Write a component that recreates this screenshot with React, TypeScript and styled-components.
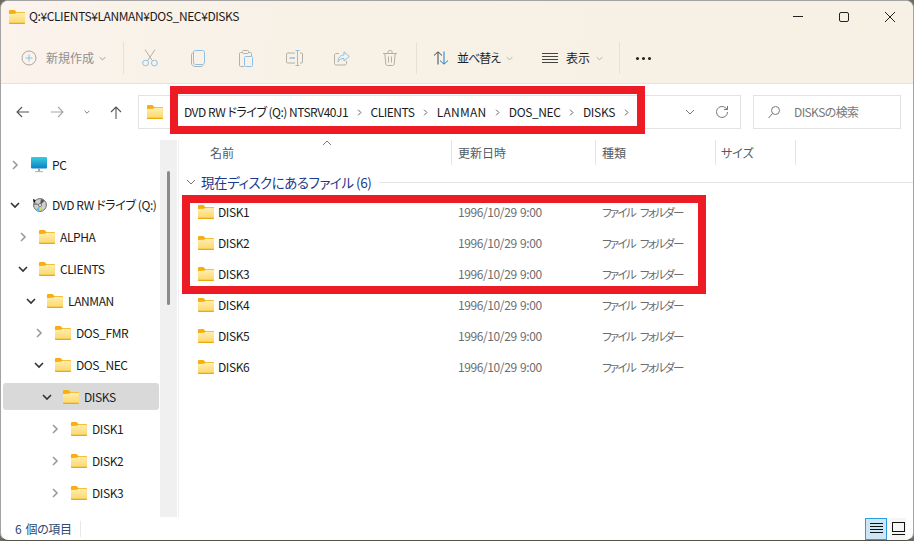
import React from "react";
import styled, { createGlobalStyle } from "styled-components";

const Global = createGlobalStyle`
  html, body { margin: 0; padding: 0; width: 914px; height: 541px; overflow: hidden; background: #6f6a60; }
  #root { width: 914px; height: 541px; }
  * { box-sizing: border-box; }
`;

const Window = styled.div`
  position: relative;
  width: 914px;
  height: 541px;
  display: flex;
  flex-direction: column;
  background: #fff;
  border: 1px solid #a3a3a3;
  border-bottom: 1px solid #55524c;
  border-radius: 8px;
  overflow: hidden;
  font-family: "Noto Sans CJK JP", "Open Sans", sans-serif;
  font-feature-settings: "palt";
  font-size: 12px;
  letter-spacing: -0.4px;
  color: #1b1b1b;
`;

const Chrome = styled.div`
  height: 83px;
  flex: none;
  background: linear-gradient(100deg, #fbf3ec 0%, #f7f1e6 35%, #f6f0e5 100%);
  border-bottom: 1px solid #e6e3dc;
  display: flex;
  flex-direction: column;
`;

const TitleBar = styled.div`
  height: 31px;
  flex: none;
  display: flex;
  align-items: center;
  padding-left: 8px;
`;

const TitleText = styled.span`
  margin: 0 0 2px 4px;
  flex: 1;
`;

const WinButton = styled.div`
  width: 46px;
  height: 31px;
  display: flex;
  align-items: center;
  justify-content: center;
`;

const Toolbar = styled.div`
  height: 32px;
  margin-top: 10px;
  display: flex;
  align-items: center;
`;

const NewButton = styled.div`
  width: 122px;
  padding-left: 20px;
  display: flex;
  align-items: center;
  color: #8f8f8f;
  letter-spacing: 0;
`;

const NewLabel = styled.span`
  margin: 0 5px 2px 9px;
`;

const ToolSep = styled.div`
  width: 1px;
  height: 32px;
  background: #e6e1d6;
  flex: none;
`;

const ToolIcon = styled.div`
  width: 48px;
  height: 32px;
  flex: none;
  display: flex;
  align-items: center;
  justify-content: center;
`;

const ToolGap = styled.div<{ $w: number }>`
  width: ${(p) => p.$w}px;
  flex: none;
`;

const TextTool = styled.div<{ $w: number; $pad: number }>`
  width: ${(p) => p.$w}px;
  padding-left: ${(p) => p.$pad}px;
  display: flex;
  align-items: center;
  color: #1f1f1f;
`;

const ToolLabel = styled.span<{ $ls: number }>`
  margin: 0 6px 2px 8px;
  letter-spacing: ${(p) => p.$ls}px;
`;

const MoreDots = styled.div`
  margin-left: 16px;
  display: flex;
  gap: 3px;
`;

const Dot = styled.span`
  width: 3px;
  height: 3px;
  border-radius: 50%;
  background: #222;
`;

const AddressRow = styled.div`
  height: 56px;
  flex: none;
  display: flex;
  align-items: center;
  padding: 0 12px 0 13px;
`;

const NavButton = styled.div<{ $w: number; $ml?: number }>`
  width: ${(p) => p.$w}px;
  margin-left: ${(p) => p.$ml ?? 0}px;
  height: 24px;
  flex: none;
  display: flex;
  align-items: center;
  justify-content: center;
`;

const AddressBox = styled.div`
  width: 603px;
  height: 34px;
  flex: none;
  border: 1px solid #e3e3e3;
  display: flex;
  align-items: center;
  padding-left: 8px;
`;

const Crumbs = styled.div`
  margin-left: 21px;
  flex: 1;
  min-width: 0;
  display: flex;
  align-items: center;
  color: #1b1b1b;
  white-space: nowrap;
`;

const CrumbLabel = styled.span<{ $ls: number }>`
  margin-bottom: 2px;
  letter-spacing: ${(p) => p.$ls}px;
`;

const CrumbChevron = styled.span`
  width: 22.5px;
  flex: none;
  display: flex;
  justify-content: center;
`;

const AddressTail = styled.div`
  display: flex;
  align-items: center;
  gap: 20px;
  padding-right: 11px;
`;

const SearchBox = styled.div`
  margin-left: 12px;
  width: 148px;
  height: 34px;
  flex: none;
  border: 1px solid #e3e3e3;
  display: flex;
  align-items: center;
  padding-left: 14px;
  gap: 14px;
  color: #767676;
  letter-spacing: -0.6px;
`;

const SearchLabel = styled.span`
  margin-bottom: 2px;
`;

const Body = styled.div`
  flex: 1;
  min-height: 0;
  display: flex;
`;

const TreePane = styled.div`
  width: 159px;
  flex: none;
  padding-top: 9px;
  overflow: hidden;
`;

const TreeRow = styled.div<{ $depth: number; $top?: boolean; $selected?: boolean }>`
  height: 32px;
  margin-bottom: ${(p) => (p.$top ? 8 : 0)}px;
  display: flex;
  align-items: center;
  padding-left: ${(p) => 6 + p.$depth * 8}px;
  position: relative;
  z-index: 0;
  &::before {
    content: "";
    display: ${(p) => (p.$selected ? "block" : "none")};
    position: absolute;
    z-index: -1;
    left: 2px;
    right: 1px;
    top: 2px;
    bottom: 3px;
    background: #d9d9d9;
    border-radius: 3px;
  }
`;

const TreeChevron = styled.span`
  width: 16px;
  flex: none;
  display: flex;
  justify-content: center;
`;

const TreeIcon = styled.span`
  width: 16px;
  margin-left: 8px;
  flex: none;
  display: flex;
`;

const TreeLabel = styled.span`
  margin: 0 0 2px 5px;
  white-space: nowrap;
`;

const ScrollTrack = styled.div`
  width: 17px;
  flex: none;
  background: #f0f0f0;
  padding-top: 31px;
  display: flex;
  justify-content: center;
`;

const ScrollThumb = styled.div`
  width: 3px;
  height: 134px;
  background: #8a8a8a;
  border-radius: 2px;
`;

const Main = styled.div`
  flex: 1;
  margin-left: 1px;
  border-left: 1px solid #f0f0f0;
  position: relative;
`;

const Header = styled.div`
  height: 25px;
  display: flex;
  color: #4f5b66;
  letter-spacing: 0;
`;

const HeadCell = styled.div<{ $w: number; $pad: number }>`
  width: ${(p) => p.$w}px;
  padding-left: ${(p) => p.$pad}px;
  border-right: 1px solid #e5e5e5;
  display: flex;
  align-items: center;
  position: relative;
`;

const SortCaret = styled.svg`
  position: absolute;
  left: 143px;
  top: 0;
`;

const Group = styled.div`
  height: 31px;
  padding: 3px 0 0 7px;
  display: flex;
  align-items: center;
  color: #1c3a8c;
  font-size: 13.5px;
  letter-spacing: -0.45px;
`;

const GroupTitle = styled.span`
  margin-left: 5px;
  white-space: nowrap;
`;

const GroupLine = styled.div`
  flex: 1;
  height: 1px;
  background: #e5e5e5;
  margin-left: 8px;
`;

const FileRow = styled.div`
  height: 31px;
  padding-left: 19px;
  display: grid;
  grid-template-columns: 260px 144px 1fr;
  align-items: center;
`;

const FileName = styled.div`
  display: flex;
  align-items: center;
  gap: 4px;
`;

const FileDate = styled.div`
  color: #6d6d6d;
  word-spacing: 1px;
`;

const FileType = styled.div`
  color: #6d6d6d;
  font-size: 11.5px;
  letter-spacing: -1.7px;
  word-spacing: 4px;
`;

const StatusBar = styled.div`
  height: 23px;
  flex: none;
  display: flex;
  align-items: center;
  padding-left: 14px;
  color: #2c4a73;
  word-spacing: 2px;
`;

const StatusText = styled.span`
  width: 65px;
`;

const StatusSep = styled.div`
  width: 1px;
  height: 16px;
  background: #e8e8e8;
`;

const ViewButtons = styled.div`
  margin-left: auto;
  margin-right: 7px;
  display: flex;
  align-items: center;
  gap: 3px;
`;

const ViewButton = styled.div<{ $on?: boolean }>`
  width: ${(p) => (p.$on ? 22 : 16)}px;
  height: 22px;
  display: flex;
  align-items: center;
  justify-content: center;
  background: ${(p) => (p.$on ? "#cde6f7" : "#f5f5f5")};
  border: ${(p) => (p.$on ? "1px solid #2a9fe0" : "none")};
`;

const Mark = styled.div<{ $l: number; $t: number; $w: number; $h: number }>`
  position: absolute;
  left: ${(p) => p.$l}px;
  top: ${(p) => p.$t}px;
  width: ${(p) => p.$w}px;
  height: ${(p) => p.$h}px;
  border: 8px solid #ed1c24;
  pointer-events: none;
`;

const Folder = () => (
  <svg width="16" height="14" viewBox="0 0 16 14">
    <defs>
      <linearGradient id="fb" x1="0" y1="0" x2="0" y2="1">
        <stop offset="0" stopColor="#ffeeb0" />
        <stop offset="1" stopColor="#fcd666" />
      </linearGradient>
    </defs>
    <path d="M0 1.2C0 .5.5 0 1.2 0h4.2l2 2H15c.6 0 1 .4 1 1v1H0z" fill="#f4b010" />
    <path d="M0 4l6-.2L7.6 2.8H15c.6 0 1 .4 1 1v9.2c0 .6-.4 1-1 1H1c-.6 0-1-.4-1-1z" fill="url(#fb)" />
    <path d="M0 12.8h16V13c0 .6-.4 1-1 1H1c-.6 0-1-.4-1-1z" fill="#eaa90e" />
  </svg>
);

const Chev = ({ dir, color = "#9a9a9a", size = 10, sw = 1.6 }: { dir: "r" | "d" | "u"; color?: string; size?: number; sw?: number }) => (
  <svg width={size} height={size} viewBox="0 0 10 10" fill="none" stroke={color} strokeWidth={sw}>
    {dir === "r" && <path d="M3 1l4 4-4 4" />}
    {dir === "d" && <path d="M1 3l4 4 4-4" />}
    {dir === "u" && <path d="M1 7l4-4 4 4" />}
  </svg>
);

const PcIcon = () => (
  <svg width="16" height="16" viewBox="0 0 16 16">
    <defs>
      <linearGradient id="pc" x1="0" y1="0" x2="0" y2="1">
        <stop offset="0" stopColor="#35cfe0" />
        <stop offset="1" stopColor="#0d7fc4" />
      </linearGradient>
    </defs>
    <rect x="0" y="0" width="16" height="11.5" rx="1" fill="url(#pc)" />
    <rect x="7" y="11.5" width="2" height="2.5" fill="#9aa6ad" />
    <rect x="4" y="14" width="8" height="1.2" fill="#b3bcc2" />
  </svg>
);

const DvdIcon = () => (
  <svg width="16" height="16" viewBox="0 0 16 16">
    <circle cx="9" cy="8" r="6.4" fill="#cfcfcf" stroke="#6a6a6a" />
    <path d="M9 8L5 13a6.4 6.4 0 0 0 7 0z" fill="#58c0e8" />
    <path d="M9 8l-1 5.500a6 6 0 0 0 4-1z" fill="#e7d93a" />
    <path d="M9 8l-6-3a6.400 6.400 0 0 0-.2 3z" fill="#8a8a8a" />
    <path d="M9 8l1-6a6 6 0 0 1 3.500 2z" fill="#555" />
    <circle cx="9" cy="8" r="1.5" fill="#fff" stroke="#444" strokeWidth=".7" />
    <path d="M2 2l2.500 1L3.600 6 2.400 4.800z" fill="#111" />
  </svg>
);

const blue = "#8cc0e6";
const grey = "#b4b0a8";

const Icons: Record<string, React.ReactNode> = {
  cut: (
    <svg width="16" height="18" viewBox="0 0 16 18" fill="none" strokeWidth="1">
      <path d="M3 .5l7.200 11M13 .5L5.800 11.500" stroke={grey} />
      <circle cx="3.600" cy="14" r="2.900" stroke={blue} />
      <circle cx="12.400" cy="14" r="2.900" stroke={blue} />
    </svg>
  ),
  copy: (
    <svg width="14" height="17" viewBox="0 0 14 17" fill="none" strokeWidth="1">
      <rect x="2.500" y=".5" width="11" height="14" rx="2" stroke={blue} />
      <path d="M2.500 2.500C1 3 .5 4 .5 5v8c0 2 1.500 3.500 3.500 3.500h6c1 0 1.700-.5 2-1.200" stroke={grey} />
    </svg>
  ),
  paste: (
    <svg width="14" height="17" viewBox="0 0 14 17" fill="none" strokeWidth="1">
      <path d="M3 2.500H1.500c-.6 0-1 .4-1 1v12c0 .6.4 1 1 1H5M10 2.500h1.500c.6 0 1 .4 1 1V6" stroke={grey} />
      <rect x="3.500" y=".5" width="6" height="3" rx="1" stroke={grey} />
      <rect x="5.500" y="6.500" width="8" height="10" rx="1" stroke={blue} />
    </svg>
  ),
  rename: (
    <svg width="17" height="16" viewBox="0 0 17 16" fill="none" strokeWidth="1">
      <path d="M9 3H1.500c-.6 0-1 .4-1 1v8c0 .6.4 1 1 1H9M14 3h1.500c.6 0 1 .4 1 1v8c0 .6-.4 1-1 1H14" stroke={grey} />
      <path d="M11.500.5v15M9.500.5h4M9.500 15.500h4" stroke={blue} />
      <path d="M3.500 8H9" stroke={blue} strokeWidth="1.600" />
    </svg>
  ),
  share: (
    <svg width="16" height="15" viewBox="0 0 16 15" fill="none" strokeWidth="1">
      <path d="M5 2.500H2c-.8 0-1.500.7-1.500 1.500v8.500c0 .8.7 1.500 1.500 1.500h9c.8 0 1.500-.7 1.500-1.500V10" stroke={grey} />
      <path d="M10 .8l5.300 4.700L10 10V7.500C7 7.500 5.200 8.500 4 11c0-4 2.200-7 6-7z" stroke={blue} />
    </svg>
  ),
  trash: (
    <svg width="14" height="16" viewBox="0 0 14 16" fill="none" stroke={grey} strokeWidth="1">
      <path d="M0 3.500h14M5 3.500V2c0-.8.5-1.500 1.200-1.500h1.600C8.500.5 9 1.200 9 2v1.500M1.800 3.500l1 10.500c.1.900.8 1.500 1.600 1.500h5.200c.8 0 1.500-.6 1.600-1.500l1-10.500M5.500 6.500v6M8.500 6.500v6" />
    </svg>
  ),
};

const tree: { label: string; depth: number; open?: boolean; selected?: boolean; top?: boolean; icon?: "pc" | "dvd" }[] = [
  { label: "PC", depth: 0, top: true, icon: "pc" },
  { label: "DVD RW ドライブ (Q:)", depth: 0, open: true, icon: "dvd" },
  { label: "ALPHA", depth: 1 },
  { label: "CLIENTS", depth: 1, open: true },
  { label: "LANMAN", depth: 2, open: true },
  { label: "DOS_FMR", depth: 3 },
  { label: "DOS_NEC", depth: 3, open: true },
  { label: "DISKS", depth: 4, open: true, selected: true },
  { label: "DISK1", depth: 5 },
  { label: "DISK2", depth: 5 },
  { label: "DISK3", depth: 5 },
];

const crumbs = [
  { label: "DVD RW ドライブ (Q:) NTSRV40J1", ls: -0.5 },
  { label: "CLIENTS", ls: -0.5 },
  { label: "LANMAN", ls: 0.2 },
  { label: "DOS_NEC", ls: -0.4 },
  { label: "DISKS", ls: -0.3 },
];
const disks = ["DISK1", "DISK2", "DISK3", "DISK4", "DISK5", "DISK6"];

export default function App() {
  return (
    <>
      <Global />
      <Window>
        <Chrome>
          <TitleBar>
            <Folder />
            <TitleText>Q:¥CLIENTS¥LANMAN¥DOS_NEC¥DISKS</TitleText>
            <WinButton>
              <svg width="10" height="10" viewBox="0 0 10 10" stroke="#222" strokeWidth="1"><path d="M0 4.500h10" /></svg>
            </WinButton>
            <WinButton>
              <svg width="10" height="10" viewBox="0 0 10 10" fill="none" stroke="#222" strokeWidth="1"><rect x=".5" y=".5" width="9" height="9" rx="1.500" /></svg>
            </WinButton>
            <WinButton>
              <svg width="10" height="10" viewBox="0 0 10 10" stroke="#222" strokeWidth="1"><path d="M0 0l10 10M10 0L0 10" /></svg>
            </WinButton>
          </TitleBar>
          <Toolbar>
            <NewButton>
              <svg width="16" height="16" viewBox="0 0 16 16" fill="none" strokeWidth="1">
                <circle cx="8" cy="8" r="7" stroke="#aaa69e" />
                <path d="M8 4.500v7M4.500 8h7" stroke={blue} />
              </svg>
              <NewLabel>新規作成</NewLabel>
              <Chev dir="d" size={7} color="#8f8f8f" sw={1.2} />
            </NewButton>
            <ToolSep />
            <ToolGap $w={2} />
            {["cut", "copy", "paste", "rename", "share", "trash"].map((k) => (
              <ToolIcon key={k}>{Icons[k]}</ToolIcon>
            ))}
            <ToolGap $w={2} />
            <ToolSep />
            <TextTool $w={106} $pad={16}>
              <svg width="16" height="14" viewBox="0 0 16 14" fill="none" strokeWidth="1">
                <path d="M5 13.500V1M1 4.500L5 .8l4 3.700" stroke="#444" />
                <path d="M11 .5V13M7 9.500l4 3.700 4-3.700" stroke="#1a7fd4" />
              </svg>
              <ToolLabel $ls={-1}>並べ替え</ToolLabel>
              <Chev dir="d" size={7} color="#9a9a9a" sw={1} />
            </TextTool>
            <TextTool $w={96} $pad={19}>
              <svg width="16" height="12" viewBox="0 0 16 12" stroke="#444" strokeWidth="1"><path d="M0 1.500h16M0 4.500h16M0 7.500h16M0 10.500h16" /></svg>
              <ToolLabel $ls={0}>表示</ToolLabel>
              <Chev dir="d" size={7} color="#9a9a9a" sw={1} />
            </TextTool>
            <ToolSep />
            <MoreDots><Dot /><Dot /><Dot /></MoreDots>
          </Toolbar>
        </Chrome>

        <AddressRow>
          <NavButton $w={16}>
            <svg width="13" height="12" viewBox="0 0 13 12" fill="none" stroke="#555" strokeWidth="1.100"><path d="M13 6H1M6 1L1 6l5 5" /></svg>
          </NavButton>
          <NavButton $w={54}>
            <svg width="13" height="12" viewBox="0 0 13 12" fill="none" stroke="#a5a5a5" strokeWidth="1.100"><path d="M0 6h12M7 1l5 5-5 5" /></svg>
          </NavButton>
          <NavButton $w={6}>
            <Chev dir="d" size={6} color="#555" sw={1.3} />
          </NavButton>
          <NavButton $w={44} $ml={4}>
            <svg width="12" height="13" viewBox="0 0 12 13" fill="none" stroke="#555" strokeWidth="1.100"><path d="M6 13V1M1 6l5-5 5 5" /></svg>
          </NavButton>
          <AddressBox>
            <Folder />
            <Crumbs>
              {crumbs.map((c) => (
                <React.Fragment key={c.label}>
                  <CrumbLabel $ls={c.ls}>{c.label}</CrumbLabel>
                  <CrumbChevron><Chev dir="r" size={7} color="#555" sw={1.300} /></CrumbChevron>
                </React.Fragment>
              ))}
            </Crumbs>
            <AddressTail>
              <Chev dir="d" size={10} color="#777" sw={1} />
              <svg width="14" height="14" viewBox="0 0 14 14" fill="none" stroke="#777" strokeWidth="1">
                <path d="M12.500 7a5.500 5.500 0 1 1-1.600-3.900L12.500 4.500M12.500 1v3.500H9" />
              </svg>
            </AddressTail>
          </AddressBox>
          <SearchBox>
            <svg width="12" height="13" viewBox="0 0 12 13" fill="none" stroke="#777" strokeWidth="1"><circle cx="7.500" cy="4.500" r="4" /><path d="M4.500 7.500L.5 12" /></svg>
            <SearchLabel>DISKSの検索</SearchLabel>
          </SearchBox>
        </AddressRow>

        <Body>
          <TreePane>
            {tree.map((t) => (
              <TreeRow key={t.label + t.depth} $depth={t.depth} $top={t.top} $selected={t.selected}>
                <TreeChevron>
                  {t.open ? <Chev dir="d" color="#333" /> : <Chev dir="r" />}
                </TreeChevron>
                <TreeIcon>
                  {t.icon === "pc" ? <PcIcon /> : t.icon === "dvd" ? <DvdIcon /> : <Folder />}
                </TreeIcon>
                <TreeLabel>{t.label}</TreeLabel>
              </TreeRow>
            ))}
          </TreePane>
          <ScrollTrack><ScrollThumb /></ScrollTrack>
          <Main>
            <Header>
              <HeadCell $w={273} $pad={31}>
                名前
                <SortCaret width="10" height="6" viewBox="0 0 10 6" fill="none" stroke="#777"><path d="M1 5l4-4 4 4" /></SortCaret>
              </HeadCell>
              <HeadCell $w={144} $pad={6}>更新日時</HeadCell>
              <HeadCell $w={120} $pad={6}>種類</HeadCell>
              <HeadCell $w={80} $pad={5}>サイズ</HeadCell>
            </Header>
            <Group>
              <Chev dir="d" size={10} color="#777" sw={1} />
              <GroupTitle>現在ディスクにあるファイル (6)</GroupTitle>
              <GroupLine />
            </Group>
            {disks.map((d) => (
              <FileRow key={d}>
                <FileName><Folder /><span>{d}</span></FileName>
                <FileDate>1996/10/29 9:00</FileDate>
                <FileType>ファイル フォルダー</FileType>
              </FileRow>
            ))}
          </Main>
        </Body>

        <StatusBar>
          <StatusText>6 個の項目</StatusText>
          <StatusSep />
          <ViewButtons>
            <ViewButton $on>
              <svg width="13" height="11" viewBox="0 0 13 11" stroke="#111" strokeWidth="1"><path d="M0 .5h13M0 3.500h13M0 6.500h13M0 9.500h13" /></svg>
            </ViewButton>
            <ViewButton>
              <svg width="13" height="13" viewBox="0 0 13 13" fill="none" stroke="#111" strokeWidth="1"><rect x=".5" y=".5" width="12" height="9" /><path d="M0 12.500h13" /></svg>
            </ViewButton>
          </ViewButtons>
        </StatusBar>

        <Mark $l={169} $t={85} $w={475} $h={48} />
        <Mark $l={181} $t={194} $w={524} $h={99} />
      </Window>
    </>
  );
}
